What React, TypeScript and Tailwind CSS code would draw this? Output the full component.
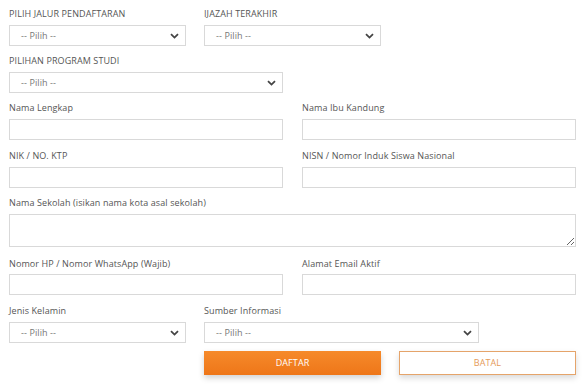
import React from 'react';

const Chevron: React.FC = () => (
  <svg width="9" height="6" viewBox="0 0 9 6" className="shrink-0">
    <path d="M1 1.2 L4.5 4.6 L8 1.2" fill="none" stroke="#444" strokeWidth="1.8" />
  </svg>
);

const Label: React.FC<{ children: React.ReactNode; className?: string }> = ({ children, className = '' }) => (
  <div className={`h-[10px] text-[9px] leading-[10px] text-[#555] whitespace-nowrap ${className}`}>{children}</div>
);

const Select: React.FC<{ className?: string }> = ({ className = '' }) => (
  <div className={`h-[21px] border border-[#d9d9d9] bg-white flex items-center pl-[11px] pr-[6px] ${className}`}>
    <span className="flex-1 text-[9px] text-[#777]">-- Pilih --</span>
    <Chevron />
  </div>
);

const Input: React.FC = () => (
  <input className="block w-full h-[21px] border border-[#d9d9d9] bg-white outline-none" />
);

export default function App() {
  return (
    <div className="w-[585px] h-[384px] bg-white px-[9px] pt-[9px] font-['Open_Sans',sans-serif] tracking-[0.1px] overflow-hidden">
      {/* jalur + ijazah */}
      <div className="grid grid-cols-3 gap-x-[18px]">
        <div>
          <Label className="uppercase">PILIH JALUR PENDAFTARAN</Label>
          <Select className="mt-[6px]" />
        </div>
        <div>
          <Label className="uppercase">IJAZAH TERAKHIR</Label>
          <Select className="mt-[6px]" />
        </div>
      </div>

      <div className="grid grid-cols-2 gap-x-[19px] mt-[10px]">
        <div>
          <Label className="uppercase">PILIHAN PROGRAM STUDI</Label>
          <Select className="mt-[6px]" />
        </div>
      </div>

      <div className="grid grid-cols-2 gap-x-[19px] mt-[10px]">
        <div>
          <Label>Nama Lengkap</Label>
          <div className="mt-[6px]"><Input /></div>
        </div>
        <div>
          <Label>Nama Ibu Kandung</Label>
          <div className="mt-[6px]"><Input /></div>
        </div>
      </div>

      <div className="grid grid-cols-2 gap-x-[19px] mt-[11px]">
        <div>
          <Label>NIK / NO. KTP</Label>
          <div className="mt-[6px]"><Input /></div>
        </div>
        <div>
          <Label>NISN / Nomor Induk Siswa Nasional</Label>
          <div className="mt-[6px]"><Input /></div>
        </div>
      </div>

      <div className="mt-[10px]">
        <Label>Nama Sekolah (isikan nama kota asal sekolah)</Label>
        <textarea className="block mt-[6px] w-full h-[33px] border border-[#d9d9d9] bg-white outline-none resize-y" />
      </div>

      <div className="grid grid-cols-2 gap-x-[19px] mt-[12px]">
        <div>
          <Label>Nomor HP / Nomor WhatsApp (Wajib)</Label>
          <div className="mt-[5px]"><Input /></div>
        </div>
        <div>
          <Label>Alamat Email Aktif</Label>
          <div className="mt-[5px]"><Input /></div>
        </div>
      </div>

      <div className="grid grid-cols-3 gap-x-[18px] mt-[11px]">
        <div>
          <Label>Jenis Kelamin</Label>
          <Select className="mt-[6px]" />
        </div>
        <div className="col-span-2">
          <Label>Sumber Informasi</Label>
          <Select className="mt-[6px] w-[275px]" />
        </div>
      </div>

      <div className="grid grid-cols-3 gap-x-[18px] mt-[8px]">
        <div />
        <button className="h-[24px] bg-gradient-to-b from-[#f68a2a] to-[#ee7618] text-white text-[9px] uppercase shadow-[0_3px_6px_rgba(0,0,0,0.18)]">
          DAFTAR
        </button>
        <button className="h-[24px] bg-white border border-[#e5a46a] text-[#e59a58] text-[9px] uppercase shadow-[0_3px_6px_rgba(0,0,0,0.15)]">
          BATAL
        </button>
      </div>
    </div>
  );
}
